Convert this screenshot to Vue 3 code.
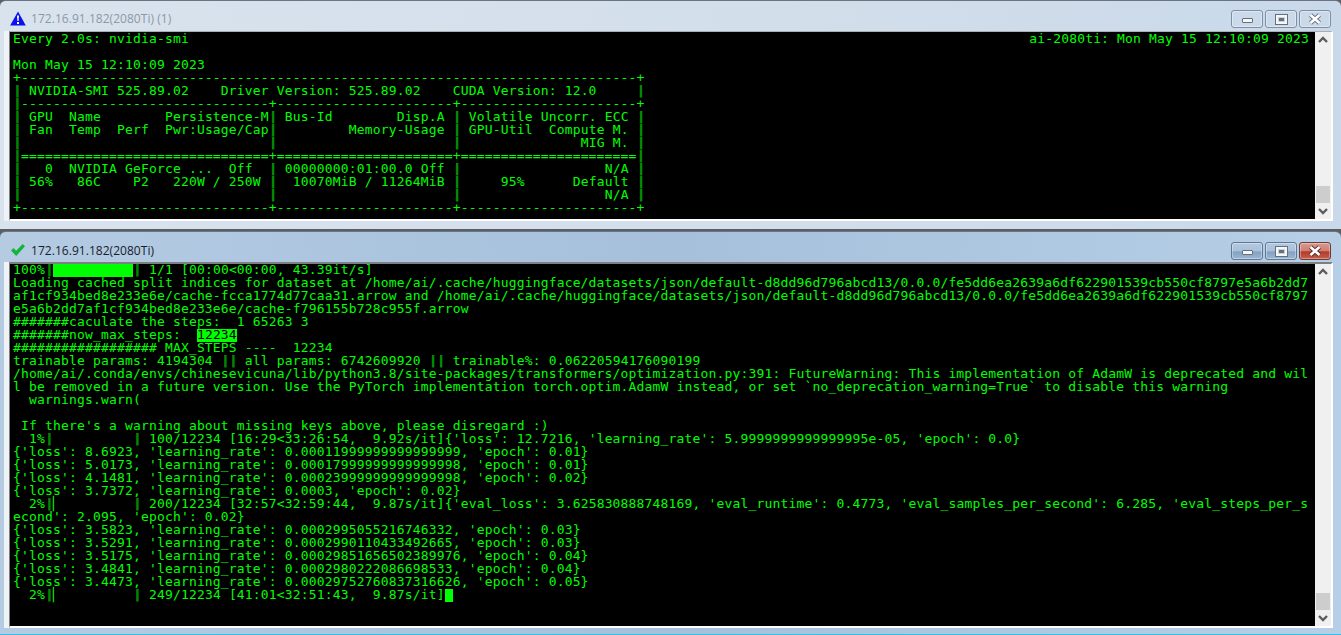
<script setup>
const parse = (line) =>
  line.split(/(\||\[\[.*?\]\])/).filter((s) => s !== '').map((s) => {
    if (s === '|') return { t: s, c: 'pipe' }
    if (s.startsWith('[[')) return { t: s.slice(2, -2), c: 'inv' }
    return { t: s, c: '' }
  })

const topLines = [
  '',
  'Mon May 15 12:10:09 2023',
  '+-----------------------------------------------------------------------------+',
  '| NVIDIA-SMI 525.89.02    Driver Version: 525.89.02    CUDA Version: 12.0     |',
  '|-------------------------------+----------------------+----------------------+',
  '| GPU  Name        Persistence-M| Bus-Id        Disp.A | Volatile Uncorr. ECC |',
  '| Fan  Temp  Perf  Pwr:Usage/Cap|         Memory-Usage | GPU-Util  Compute M. |',
  '|                               |                      |               MIG M. |',
  '|===============================+======================+======================|',
  '|   0  NVIDIA GeForce ...  Off  | 00000000:01:00.0 Off |                  N/A |',
  '| 56%   86C    P2   220W / 250W |  10070MiB / 11264MiB |     95%      Default |',
  '|                               |                      |                  N/A |',
  '+-------------------------------+----------------------+----------------------+',
].map(parse)

const bottomLines = [
  '100%|[[          ]]| 1/1 [00:00<00:00, 43.39it/s]',
  'Loading cached split indices for dataset at /home/ai/.cache/huggingface/datasets/json/default-d8dd96d796abcd13/0.0.0/fe5dd6ea2639a6df622901539cb550cf8797e5a6b2dd7',
  'af1cf934bed8e233e6e/cache-fcca1774d77caa31.arrow and /home/ai/.cache/huggingface/datasets/json/default-d8dd96d796abcd13/0.0.0/fe5dd6ea2639a6df622901539cb550cf8797',
  'e5a6b2dd7af1cf934bed8e233e6e/cache-f796155b728c955f.arrow',
  '#######caculate the steps:  1 65263 3',
  '#######now_max_steps:  [[12234]]',
  '################## MAX_STEPS ----  12234',
  'trainable params: 4194304 || all params: 6742609920 || trainable%: 0.06220594176090199',
  '/home/ai/.conda/envs/chinesevicuna/lib/python3.8/site-packages/transformers/optimization.py:391: FutureWarning: This implementation of AdamW is deprecated and wil',
  'l be removed in a future version. Use the PyTorch implementation torch.optim.AdamW instead, or set `no_deprecation_warning=True` to disable this warning',
  '  warnings.warn(',
  '',
  " If there's a warning about missing keys above, please disregard :)",
  "  1%|          | 100/12234 [16:29<33:26:54,  9.92s/it]{'loss': 12.7216, 'learning_rate': 5.9999999999999995e-05, 'epoch': 0.0}",
  "{'loss': 8.6923, 'learning_rate': 0.00011999999999999999, 'epoch': 0.01}",
  "{'loss': 5.0173, 'learning_rate': 0.00017999999999999998, 'epoch': 0.01}",
  "{'loss': 4.1481, 'learning_rate': 0.00023999999999999998, 'epoch': 0.02}",
  "{'loss': 3.7372, 'learning_rate': 0.0003, 'epoch': 0.02}",
  "  2%|▏         | 200/12234 [32:57<32:59:44,  9.87s/it]{'eval_loss': 3.625830888748169, 'eval_runtime': 0.4773, 'eval_samples_per_second': 6.285, 'eval_steps_per_s",
  "econd': 2.095, 'epoch': 0.02}",
  "{'loss': 3.5823, 'learning_rate': 0.0002995055216746332, 'epoch': 0.03}",
  "{'loss': 3.5291, 'learning_rate': 0.0002990110433492665, 'epoch': 0.03}",
  "{'loss': 3.5175, 'learning_rate': 0.00029851656502389976, 'epoch': 0.04}",
  "{'loss': 3.4841, 'learning_rate': 0.0002980222086698533, 'epoch': 0.04}",
  "{'loss': 3.4473, 'learning_rate': 0.00029752760837316626, 'epoch': 0.05}",
  "  2%|▏         | 249/12234 [41:01<32:51:43,  9.87s/it][[ ]]",
].map(parse)
</script>

<template>
  <div class="desktop">
    <section class="win inactive">
      <header class="title">
        <svg class="ico" width="16" height="15" viewBox="0 0 16 15">
          <path d="M8 0.5 L15.8 14.5 H0.2 Z" fill="#0a10f0" />
          <path d="M7 4.5 H9 L8.6 10 H7.4 Z M7 11 H9 V13 H7 Z" fill="#fff" />
        </svg>
        <span class="name">172.16.91.182(2080Ti) (1)</span>
        <div class="controls">
          <button class="btn"><i class="g-min"></i></button>
          <button class="btn"><i class="g-max"></i></button>
          <button class="btn">
            <svg width="14" height="12" viewBox="0 0 14 12">
              <path d="M2.5 2 L11.5 10 M11.5 2 L2.5 10" stroke="#66707c" stroke-width="4.4" />
              <path d="M2.5 2 L11.5 10 M11.5 2 L2.5 10" stroke="#fff" stroke-width="2.6" />
            </svg>
          </button>
        </div>
      </header>
      <div class="client">
        <div class="term">
          <div class="head">
            <span>Every 2.0s: nvidia-smi</span>
            <span>ai-2080ti: Mon May 15 12:10:09 2023</span>
          </div>
          <div v-for="(l, i) in topLines" :key="i" class="line">
            <span v-for="(s, j) in l" :key="j" :class="s.c">{{ s.t }}</span>
          </div>
        </div>
        <div class="scroll">
          <svg class="arrow" width="16" height="16" viewBox="0 0 16 16"><path d="M4 10 L8 6 L12 10" fill="none" stroke="#5c5c5c" stroke-width="2.4" /></svg>
          <div class="track"></div>
          <div class="thumb"></div>
          <svg class="arrow" width="16" height="16" viewBox="0 0 16 16"><path d="M4 6 L8 10 L12 6" fill="none" stroke="#5c5c5c" stroke-width="2.4" /></svg>
        </div>
      </div>
    </section>

    <section class="win active">
      <header class="title">
        <svg class="ico" width="16" height="14" viewBox="0 0 16 14">
          <path d="M1 7.5 L3.6 5 L6.2 7.8 L12.6 1 L15 3.2 L6.2 13 Z" fill="#12b53a" />
        </svg>
        <span class="name">172.16.91.182(2080Ti)</span>
        <div class="controls">
          <button class="btn"><i class="g-min"></i></button>
          <button class="btn"><i class="g-max"></i></button>
          <button class="btn close">
            <svg width="14" height="12" viewBox="0 0 14 12">
              <path d="M2.5 2 L11.5 10 M11.5 2 L2.5 10" stroke="#5a2a24" stroke-width="4.4" />
              <path d="M2.5 2 L11.5 10 M11.5 2 L2.5 10" stroke="#fff" stroke-width="2.6" />
            </svg>
          </button>
        </div>
      </header>
      <div class="client">
        <div class="term">
          <div v-for="(l, i) in bottomLines" :key="i" class="line">
            <span v-for="(s, j) in l" :key="j" :class="s.c">{{ s.t }}</span>
          </div>
        </div>
        <div class="scroll">
          <svg class="arrow" width="16" height="16" viewBox="0 0 16 16"><path d="M4 10 L8 6 L12 10" fill="none" stroke="#5c5c5c" stroke-width="2.4" /></svg>
          <div class="track"></div>
          <div class="thumb"></div>
          <svg class="arrow" width="16" height="16" viewBox="0 0 16 16"><path d="M4 6 L8 10 L12 6" fill="none" stroke="#5c5c5c" stroke-width="2.4" /></svg>
        </div>
      </div>
    </section>
  </div>
</template>

<style scoped>
.desktop {
  width: 1341px;
  height: 635px;
  display: flex;
  flex-direction: column;
  gap: 2px;
  background: #5a5f66;
  overflow: hidden;
}
.win {
  display: flex;
  flex-direction: column;
  border-top: 1px solid #6b7480;
  border-radius: 6px 6px 0 0;
  padding: 0 8px 0 9px;
}
.inactive {
  height: 229px;
  box-sizing: border-box;
  background: linear-gradient(90deg, #d9e3ee 0%, #d2deea 60%, #c9d9ea 100%);
}
.active {
  flex: 1;
  min-height: 0;
  background: linear-gradient(90deg, #b4cbe2 0%, #a6c0dc 50%, #b6cfe6 100%);
  border-bottom: 1px solid #2ec4e8;
}
.title {
  display: flex;
  align-items: flex-start;
  flex: none;
  margin-right: 2px;
  margin-left: 1px;
  height: 30px;
  box-sizing: border-box;
}
.inactive .title {
  padding-top: 9px;
}
.active .title {
  padding-top: 10px;
}
.ico {
  margin-top: 1px;
  flex: none;
}
.name {
  margin-left: 5px;
  font: 12px/18px "Open Sans", "Noto Sans", sans-serif;
  letter-spacing: 0.04px;
}
.inactive .name {
  color: #8d98a4;
}
.active .name {
  color: #16202c;
}
.controls {
  margin-left: auto;
  display: flex;
  gap: 2px;
}
.btn {
  width: 32px;
  height: 18px;
  padding: 0;
  border: 1px solid #7f8fa3;
  border-radius: 3px;
  display: flex;
  align-items: center;
  justify-content: center;
  background: transparent;
  box-shadow: inset 0 0 0 1px rgba(255, 255, 255, 0.35);
}
.active .btn {
  background: linear-gradient(180deg, #b4c9e0 0%, #a9c0da 50%, #83a0c2 55%, #9cb6d2 100%);
  border-color: #5f7893;
}
.active .btn.close {
  background: linear-gradient(180deg, #d99a90 0%, #cf7f72 48%, #b23a2b 55%, #c5604f 100%);
  border-color: #6e3a34;
}
.g-min {
  display: block;
  width: 11px;
  height: 5px;
  box-sizing: border-box;
  margin-top: 3px;
  background: #f4f6f8;
  border: 1px solid #66707c;
  border-radius: 1px;
}
.g-max {
  display: block;
  width: 11px;
  height: 9px;
  box-sizing: border-box;
  border: 2px solid #f4f6f8;
  outline: 1px solid #66707c;
  background: #66707c;
  box-shadow: inset 0 0 0 1px #c9d3dd;
}
.client {
  flex: 1;
  min-height: 0;
  display: flex;
  border-left: 1px solid #7d7f82;
  border-right: 2px solid #fff;
  border-top: 1px solid #a8aeb4;
  border-bottom: 2px solid #fff;
  margin-bottom: 8px;
  box-shadow: -5px 0 0 #eef3f8;
}
.active .client {
  border-top: 2px solid #7d7f82;
  margin-bottom: 6px;
}
.term {
  flex: 1;
  min-width: 0;
  background: #000;
  color: #00ff00;
  padding: 0 6px 0 3px;
  font-family: "DejaVu Sans Mono", monospace;
  font-size: 13px;
  letter-spacing: 0.168px;
  line-height: 13px;
}
.head {
  display: flex;
  justify-content: space-between;
  height: 13px;
  white-space: pre;
}
.line {
  height: 13px;
  white-space: pre;
}
.active .line {
  line-height: 11px;
}
.pipe {
  color: #00a000;
  text-shadow: 1px 0 0 #00a000;
}
.inv {
  background: #00ff00;
  color: #000;
}
.active .inv {
  display: inline-block;
  height: 13px;
  line-height: 11px;
  vertical-align: top;
}
.scroll {
  flex: none;
  width: 16px;
  display: flex;
  flex-direction: column;
  background: #f0f0f0;
}
.arrow {
  flex: none;
}
.track {
  flex: 1;
}
.thumb {
  flex: none;
  height: 17px;
  margin: 0 1px;
  background: #cdcdcd;
}
</style>

<style>
html,
body {
  margin: 0;
  background: #5a5f66;
}
</style>
